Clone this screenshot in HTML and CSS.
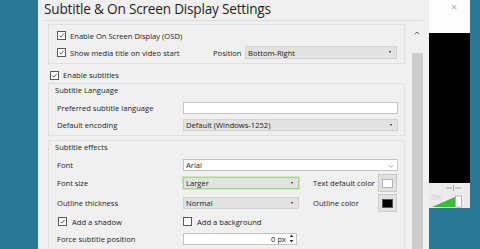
FILE: index.html
```html
<!DOCTYPE html>
<html lang="en">
<head>
    <meta charset="UTF-8">
    <title>Subtitle &amp; On Screen Display Settings</title>
    <link rel="stylesheet" href="styles.css">
</head>
<body>
    <div class="gutter"></div>

    <div class="dialog">
        <div class="dialog-title">Subtitle &amp; On Screen Display Settings</div>

        <div class="dialog-body">
            <div class="content">
                <!-- OSD -->
                <div class="box osd">
                    <div class="row">
                        <span class="check on"><svg viewBox="0 0 9 9"><polyline points="1.8,4.6 3.7,6.6 7.4,2.2"/></svg></span>
                        <span>Enable On Screen Display (OSD)</span>
                    </div>
                    <div class="row">
                        <span class="check on"><svg viewBox="0 0 9 9"><polyline points="1.8,4.6 3.7,6.6 7.4,2.2"/></svg></span>
                        <span class="grow">Show media title on video start</span>
                        <span class="pos-label">Position</span>
                        <span class="combo pos">Bottom-Right<i class="dot"></i></span>
                    </div>
                </div>

                <div class="row enable-subs">
                    <span class="check on"><svg viewBox="0 0 9 9"><polyline points="1.8,4.6 3.7,6.6 7.4,2.2"/></svg></span>
                    <span>Enable subtitles</span>
                </div>

                <!-- Subtitle language -->
                <div class="box group">
                    <div class="group-title">Subtitle Language</div>
                    <div class="field">
                        <span class="label">Preferred subtitle language</span>
                        <span class="edit wide"></span>
                    </div>
                    <div class="field">
                        <span class="label">Default encoding</span>
                        <span class="combo wide">Default (Windows-1252)<i class="dot"></i></span>
                    </div>
                </div>

                <!-- Subtitle effects -->
                <div class="box group effects">
                    <div class="group-title">Subtitle effects</div>
                    <div class="field">
                        <span class="label">Font</span>
                        <span class="edit wide">Arial<svg class="chev" viewBox="0 0 7 4"><polyline points="0.5,0.5 3.5,3.5 6.5,0.5"/></svg></span>
                    </div>
                    <div class="field tall">
                        <span class="label">Font size</span>
                        <span class="combo short focus">Larger<i class="dot"></i></span>
                        <span class="color-label">Text default color</span>
                        <span class="color-btn"><i class="swatch white"></i></span>
                    </div>
                    <div class="field tall">
                        <span class="label">Outline thickness</span>
                        <span class="combo short">Normal<i class="dot"></i></span>
                        <span class="color-label">Outline color</span>
                        <span class="color-btn"><i class="swatch black"></i></span>
                    </div>
                    <div class="field checks">
                        <span class="label">
                            <span class="check on"><svg viewBox="0 0 9 9"><polyline points="1.8,4.6 3.7,6.6 7.4,2.2"/></svg></span>
                            <span>Add a shadow</span>
                        </span>
                        <span class="check"></span>
                        <span>Add a background</span>
                    </div>
                    <div class="field">
                        <span class="label">Force subtitle position</span>
                        <span class="edit spin">0 px<svg class="spinner" viewBox="0 0 5 9"><polygon points="2.5,0.5 4.5,3 0.5,3"/><polygon points="0.5,6 4.5,6 2.5,8.5"/></svg></span>
                    </div>
                </div>
            </div>

            <div class="scrollbar">
                <svg class="arrow-up" viewBox="0 0 7 4"><polyline points="0.8,3.4 3.5,0.8 6.2,3.4"/></svg>
                <div class="thumb"></div>
            </div>
        </div>
    </div>

    <div class="side">
        <div class="side-top">&times;</div>
        <div class="video"></div>
        <div class="volume">
            <svg viewBox="0 0 41 25">
                <text x="2" y="17" class="pct">0%</text>
                <line x1="17" y1="5" x2="23" y2="5" />
                <line x1="26" y1="5" x2="32" y2="5" />
                <line x1="24.5" y1="2" x2="24.5" y2="8" />
                <polygon points="3,24 26,24 26,14" class="green" />
                <rect x="26.5" y="13" width="6" height="11" class="box-w" />
            </svg>
        </div>
    </div>
</body>
</html>
```

FILE: styles.css
```css
body {
    margin: 0;
    width: 480px;
    height: 249px;
    overflow: hidden;
    display: flex;
    align-items: flex-start;
    background-color: #2a7896;
    font-family: "Open Sans", "Noto Sans", sans-serif;
    font-size: 7.6px;
    color: #1c1c1c;
}

.gutter {
    width: 38px;
    flex-shrink: 0;
}

.dialog {
    width: 391px;
    height: 249px;
    flex-shrink: 0;
    background-color: #f0f0f0;
    display: flex;
    flex-direction: column;
}

.dialog-title {
    height: 21px;
    margin: 0 6px;
    font-size: 13.6px;
    letter-spacing: -0.2px;
    line-height: 17px;
    box-sizing: border-box;
    color: #1e1e1e;
    border-bottom: 1px solid #dcdcdc;
    white-space: nowrap;
}

.dialog-body {
    flex: 1;
    display: flex;
    min-height: 0;
}

.content {
    width: 357px;
    padding: 0 6px 0 10px;
}

.box {
    border: 1px solid #e0e0e0;
    box-sizing: border-box;
}

.osd {
    margin-top: 3px;
    height: 40px;
    padding: 2px 7px 0 8px;
}

.row {
    display: flex;
    align-items: center;
    height: 17px;
    white-space: nowrap;
}

.grow {
    flex: 1;
}

.pos-label {
    width: 32px;
}

.check {
    width: 9px;
    height: 9px;
    box-sizing: border-box;
    border: 1px solid #5a5a5a;
    background-color: #fff;
    margin-right: 4px;
    flex-shrink: 0;
    display: inline-flex;
}

.check svg {
    width: 7px;
    height: 7px;
    fill: none;
    stroke: #333;
    stroke-width: 1;
}

.enable-subs {
    margin-top: 3px;
    height: 16px;
    padding-left: 2px;
}

.group {
    padding: 0 7px 2px 6px;
}

.group-title {
    height: 12px;
    line-height: 12px;
    margin-bottom: 3px;
}

.effects {
    margin-top: 4px;
    border-bottom: none;
    height: 120px;
}

.field {
    display: flex;
    align-items: center;
    height: 17px;
    padding-left: 2px;
    white-space: nowrap;
}

.field.tall {
    height: 20px;
}

.label {
    width: 126px;
    flex-shrink: 0;
    display: flex;
    align-items: center;
}

.checks .label .check {
    margin-left: 1px;
}

.checks .check {
    margin-right: 5px;
}

.edit,
.combo {
    position: relative;
    height: 12px;
    box-sizing: border-box;
    line-height: 10px;
    padding-left: 2px;
    border: 1px solid #c4c4c4;
    display: flex;
    align-items: center;
    flex-shrink: 0;
}

.edit {
    background-color: #fff;
}

.combo {
    background-color: #e2e2e2;
    border-color: #d2d2d2;
}

.wide {
    width: 215px;
}

.pos {
    width: 152px;
    height: 13px;
}

.short {
    width: 116px;
}

.spin {
    width: 114px;
    justify-content: flex-end;
    padding-right: 2px;
}

.focus {
    border: 1px solid #a9d58a;
    box-shadow: 0 0 0 1px #cfe8bd;
}

.dot {
    position: absolute;
    right: 5px;
    top: 4px;
    width: 0;
    height: 0;
    border-left: 1.5px solid transparent;
    border-right: 1.5px solid transparent;
    border-top: 2px solid #222;
}

.chev {
    position: absolute;
    right: 3px;
    top: 4px;
    width: 6px;
    height: 4px;
    fill: none;
    stroke: #888;
    stroke-width: 0.8;
}

.spinner {
    width: 5px;
    height: 9px;
    margin-left: 3px;
    fill: #333;
}

.color-label {
    margin-left: 14px;
    width: 65px;
}

.color-btn {
    width: 19px;
    height: 18px;
    box-sizing: border-box;
    border: 1px solid #cacaca;
    background-color: #e1e1e1;
    display: flex;
    align-items: center;
    justify-content: center;
}

.swatch {
    width: 11px;
    height: 9px;
    box-sizing: border-box;
    border: 1px solid #b5b5b5;
}

.swatch.white {
    background-color: #fff;
}

.swatch.black {
    background-color: #000;
    border-color: #555;
}

.scrollbar {
    width: 12px;
    margin-right: 6px;
    display: flex;
    flex-direction: column;
    align-items: center;
}

.arrow-up {
    width: 6px;
    height: 4px;
    margin-top: 10px;
    fill: none;
    stroke: #555;
    stroke-width: 1.1;
}

.thumb {
    width: 11px;
    flex: 1;
    margin-top: 18px;
    background-color: #cdcdcd;
}

.side {
    width: 41px;
    flex-shrink: 0;
    display: flex;
    flex-direction: column;
}

.side-top {
    height: 33px;
    background-color: #fdfdfd;
    color: #b0b0b0;
    font-size: 11px;
    line-height: 14px;
    padding-left: 22px;
    box-sizing: border-box;
}

.video {
    height: 150px;
    background-color: #000;
}

.volume {
    height: 25px;
    background-color: #ececec;
}

.volume svg {
    display: block;
    width: 41px;
    height: 25px;
    stroke: #888;
    stroke-width: 0.7;
}

.volume .pct {
    font-size: 7px;
    fill: #d0d0d0;
    stroke: none;
}

.volume .green {
    fill: #2fc12f;
    stroke: none;
}

.volume .box-w {
    fill: #fff;
    stroke: #999;
}
```
